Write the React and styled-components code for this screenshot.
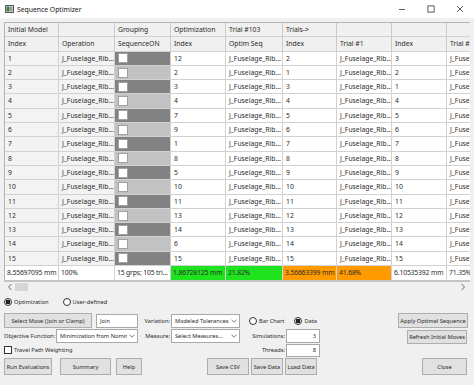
import React from "react";
import styled, { createGlobalStyle } from "styled-components";

const optIndex = [12, 2, 3, 4, 7, 9, 1, 8, 5, 10, 11, 13, 14, 6, 15];
const trialIndex = [2, 1, 3, 4, 5, 6, 7, 8, 9, 10, 11, 12, 13, 14, 15];
const trial2Index = [3, 2, 1, 4, 5, 6, 7, 8, 9, 10, 11, 12, 13, 14, 15];
const opName = "J_Fuselage_Rib…";

const topHeader = ["Initial Model", "", "Grouping", "Optimization", "Trial #103", "Trials->", "", "", ""];
const subHeader = ["Index", "Operation", "SequenceON", "Index", "Optim Seq", "Index", "Trial #1", "Index", "Trial #2"];
const summary = [
  { text: "8.55697095 mm" },
  { text: "100%" },
  { text: "15 grps; 105 tri…" },
  { text: "1.86728125 mm", tone: "good" },
  { text: "21.82%", tone: "good" },
  { text: "3.56663399 mm", tone: "warn" },
  { text: "41.68%", tone: "warn" },
  { text: "6.10535392 mm" },
  { text: "71.35%" },
];

const App = () => {
  return (
    <>
      <GlobalStyle />
      <Window>
        <TitleBar>
          <AppIcon viewBox="0 0 9 8">
            <rect x="0.5" y="0.5" width="8" height="7" fill="#e8e8e8" stroke="#5a5a5a" />
            <rect x="1.5" y="1.5" width="3" height="5" fill="#2f7d3a" />
            <rect x="5" y="1.5" width="2.5" height="5" fill="#9a9a9a" />
          </AppIcon>
          <Title>Sequence Optimizer</Title>
          <WindowButtons>
            <WindowButton>
              <svg width="8" height="8" viewBox="0 0 8 8">
                <line x1="1" y1="4.5" x2="7" y2="4.5" stroke="#333" strokeWidth="0.8" />
              </svg>
            </WindowButton>
            <WindowButton>
              <svg width="8" height="8" viewBox="0 0 8 8">
                <rect x="0.9" y="0.9" width="6.2" height="6.2" fill="none" stroke="#333" strokeWidth="0.8" />
              </svg>
            </WindowButton>
            <WindowButton>
              <svg width="8" height="8" viewBox="0 0 8 8">
                <path d="M1 1 L7 7 M7 1 L1 7" stroke="#333" strokeWidth="0.8" />
              </svg>
            </WindowButton>
          </WindowButtons>
        </TitleBar>

        <Body>
          <TableFrame>
            <Grid>
              {topHeader.map((t, i) => (
                <HeaderCell key={"h1" + i}>{t}</HeaderCell>
              ))}
              {subHeader.map((t, i) => (
                <HeaderCell key={"h2" + i}>{t}</HeaderCell>
              ))}
              {optIndex.map((opt, r) => (
                <React.Fragment key={"r" + r}>
                  <RowHeadCell>{r + 1}</RowHeadCell>
                  <RowHeadCell>{opName}</RowHeadCell>
                  <GroupCell $dark={r % 2 === 0}>
                    <CellCheck />
                  </GroupCell>
                  <DataCell>{opt}</DataCell>
                  <DataCell>{opName}</DataCell>
                  <DataCell>{trialIndex[r]}</DataCell>
                  <DataCell>{opName}</DataCell>
                  <DataCell>{trial2Index[r]}</DataCell>
                  <DataCell>{opName}</DataCell>
                </React.Fragment>
              ))}
              {summary.map((s, i) => (
                <SummaryCell key={"s" + i} $tone={s.tone}>
                  {s.text}
                </SummaryCell>
              ))}
            </Grid>
          </TableFrame>
          <ScrollBar>
            <ScrollArrow viewBox="0 0 6 8">
              <path d="M4.5 1 L1.5 4 L4.5 7" fill="none" stroke="#555" strokeWidth="0.9" />
            </ScrollArrow>
            <ScrollThumb />
            <ScrollArrow viewBox="0 0 6 8" style={{ marginLeft: "auto" }}>
              <path d="M1.5 1 L4.5 4 L1.5 7" fill="none" stroke="#555" strokeWidth="0.9" />
            </ScrollArrow>
          </ScrollBar>

          <Controls>
            {/* row 1 */}
            <RadioRow>
              <RadioOption>
                <Radio $checked />
                Optimization
              </RadioOption>
              <RadioOption>
                <Radio />
                User-defined
              </RadioOption>
            </RadioRow>
            <Spacer />
            <Spacer />
            <Spacer />

            {/* row 2 */}
            <FieldRow>
              <Button $w={88}>Select Move (Join or Clamp)</Button>
              <TextBox $w={42} style={{ marginLeft: 4 }}>Join</TextBox>
              <FieldLabel $w={33}>Variation:</FieldLabel>
              <Select $w={69}>
                <SelectText>Modeled Tolerances</SelectText>
                <Chevron />
              </Select>
            </FieldRow>
            <FieldRow>
              <RadioOption style={{ marginLeft: 1 }}>
                <Radio />
                Bar Chart
              </RadioOption>
              <RadioOption style={{ marginLeft: 10 }}>
                <Radio $checked />
                Data
              </RadioOption>
            </FieldRow>
            <Spacer />
            <FieldRow $end>
              <Button $w={70}>Apply Optimal Sequence</Button>
            </FieldRow>

            {/* row 3 */}
            <FieldRow>
              <FieldLabel $w={52} $left>Objective Function:</FieldLabel>
              <Select $w={82}>
                <SelectText>Minimization from Nominal</SelectText>
                <Chevron />
              </Select>
              <FieldLabel $w={33}>Measure:</FieldLabel>
              <Select $w={69}>
                <SelectText>Select Measures...</SelectText>
                <Chevron />
              </Select>
            </FieldRow>
            <FieldRow>
              <FieldLabel $w={38}>Simulations:</FieldLabel>
              <TextBox $w={34} $right>3</TextBox>
            </FieldRow>
            <Spacer />
            <FieldRow $end>
              <Button $w={60} $h={14} style={{ marginTop: 3, marginRight: 1 }}>
                Refresh Initial Moves
              </Button>
            </FieldRow>

            {/* row 4 */}
            <FieldRow>
              <CheckOption>
                <CheckBox />
                Travel Path Weighting
              </CheckOption>
            </FieldRow>
            <FieldRow>
              <FieldLabel $w={38}>Threads:</FieldLabel>
              <TextBox $w={34} $h={13} $right>8</TextBox>
            </FieldRow>
            <Spacer />
            <Spacer />
          </Controls>

          <BottomBar>
            <Button $w={48} $h={17}>Run Evaluations</Button>
            <Button $w={51} $h={17} style={{ marginLeft: 8 }}>Summary</Button>
            <Button $w={26} $h={17} style={{ marginLeft: 5 }}>Help</Button>
            <Button $w={42} $h={17} style={{ marginLeft: 65 }}>Save CSV</Button>
            <Button $w={32} $h={17} style={{ marginLeft: 2 }}>Save Data</Button>
            <Button $w={32} $h={17} style={{ marginLeft: 2 }}>Load Data</Button>
            <Button $w={45} $h={17} style={{ marginLeft: "auto", marginRight: 3 }}>Close</Button>
          </BottomBar>
        </Body>
      </Window>
    </>
  );
};

export default App;

const GlobalStyle = createGlobalStyle`
  html, body {
    margin: 0;
    padding: 0;
    background: #f0f0f0;
  }
  body {
    font-family: "Noto Sans", "Open Sans", sans-serif;
    color: #2a2a2a;
  }
  * {
    box-sizing: border-box;
  }
`;

const Window = styled.div`
  width: 474px;
  height: 385px;
  background: #f0f0f0;
  display: flex;
  flex-direction: column;
  overflow: hidden;
`;

const TitleBar = styled.div`
  height: 18px;
  flex-shrink: 0;
  background: #ffffff;
  display: flex;
  align-items: center;
  padding-left: 5px;
`;

const AppIcon = styled.svg`
  width: 9px;
  height: 8px;
`;

const Title = styled.span`
  font-size: 6.8px;
  margin-left: 3px;
  color: #111;
`;

const WindowButtons = styled.div`
  margin-left: auto;
  display: flex;
  height: 100%;
`;

const WindowButton = styled.div`
  width: 29px;
  display: flex;
  align-items: center;
  justify-content: center;
`;

const Body = styled.div`
  flex: 1;
  padding: 4px 4px 0;
  display: flex;
  flex-direction: column;
`;

const TableFrame = styled.div`
  width: 466px;
  overflow: hidden;
  border-top: 1px solid #b4b4b4;
  border-left: 1px solid #b4b4b4;
`;

const Grid = styled.div`
  display: grid;
  grid-template-columns: 54px 56px 56px 55px 57px 54px 55px 55px 60px;
  grid-auto-rows: 14.3px;
  width: max-content;
  background: #ffffff;
`;

const Cell = styled.div`
  border-right: 1px solid #d2d2d2;
  border-bottom: 1px solid #d2d2d2;
  font-size: 6.8px;
  line-height: 13px;
  padding-left: 3px;
  white-space: nowrap;
  overflow: hidden;
  text-overflow: clip;
  color: #2a2a2a;
`;

const HeaderCell = styled(Cell)`
  background: #f0f0f0;
  border-right-color: #cacaca;
`;

const RowHeadCell = styled(Cell)`
  background: #f3f3f3;
`;

const DataCell = styled(Cell)`
  background: #ffffff;
`;

const GroupCell = styled(Cell)`
  background: ${(p) => (p.$dark ? "#828282" : "#c2c2c2")};
  display: flex;
  align-items: center;
`;

const CellCheck = styled.span`
  width: 10px;
  height: 10px;
  background: #ffffff;
  border: 1px solid #a0a0a0;
`;

const toneColors = { good: "#1fe31f", warn: "#ff9a00" };

const SummaryCell = styled(Cell)`
  background: ${(p) => toneColors[p.$tone] || "#ffffff"};
  border-bottom: none;
  letter-spacing: -0.15px;
  padding-left: 2px;
`;

const ScrollBar = styled.div`
  width: 466px;
  height: 11px;
  border-top: 2px solid #c4c4c4;
  display: flex;
  align-items: center;
  padding: 0 4px 0 3px;
`;

const ScrollArrow = styled.svg`
  width: 6px;
  height: 8px;
`;

const ScrollThumb = styled.div`
  width: 13px;
  height: 8px;
  margin-left: 2px;
  background: #d6d6d6;
`;

const Controls = styled.div`
  display: grid;
  grid-template-columns: 236px 72px 1fr 70px;
  column-gap: 8px;
  grid-template-rows: 17px 15px 15px 14px;
  padding-top: 5px;
  padding-right: 2px;
  font-size: 5.7px;
`;

const Spacer = styled.div``;

const RadioRow = styled.div`
  display: flex;
  align-items: flex-start;
  gap: 14px;
  padding-top: 2px;
`;

const RadioOption = styled.label`
  display: flex;
  align-items: center;
  gap: 2px;
  font-size: 5.7px;
  white-space: nowrap;
`;

const Radio = styled.span`
  width: 8px;
  height: 8px;
  border-radius: 50%;
  border: 1px solid #333;
  background: ${(p) => (p.$checked ? "radial-gradient(circle, #222 0 2.2px, #fff 2.6px)" : "#fff")};
`;

const FieldRow = styled.div`
  display: flex;
  align-items: center;
  justify-content: ${(p) => (p.$end ? "flex-end" : "flex-start")};
`;

const Button = styled.div`
  width: ${(p) => p.$w}px;
  height: ${(p) => p.$h || 15}px;
  flex-shrink: 0;
  background: #e1e1e1;
  border: 1px solid #adadad;
  display: flex;
  align-items: center;
  justify-content: center;
  font-size: 5.7px;
  white-space: nowrap;
  overflow: hidden;
  color: #2a2a2a;
`;

const TextBox = styled.div`
  width: ${(p) => p.$w}px;
  height: ${(p) => p.$h || 14}px;
  flex-shrink: 0;
  background: #ffffff;
  border: 1px solid #a8a8a8;
  display: flex;
  align-items: center;
  justify-content: ${(p) => (p.$right ? "flex-end" : "flex-start")};
  padding: 0 3px;
  font-size: 5.7px;
`;

const FieldLabel = styled.span`
  width: ${(p) => p.$w}px;
  flex-shrink: 0;
  text-align: ${(p) => (p.$left ? "left" : "right")};
  padding-right: 1px;
  white-space: nowrap;
  font-size: 5.7px;
`;

const Select = styled.div`
  width: ${(p) => p.$w}px;
  height: 14px;
  flex-shrink: 0;
  background: #ffffff;
  border: 1px solid #a8a8a8;
  display: flex;
  align-items: center;
  padding: 0 2px 0 3px;
`;

const SelectText = styled.span`
  flex: 1;
  overflow: hidden;
  white-space: nowrap;
  font-size: 5.7px;
`;

const ChevronSvg = styled.svg`
  width: 6px;
  height: 4px;
  margin-left: 2px;
  flex-shrink: 0;
`;

const Chevron = () => (
  <ChevronSvg viewBox="0 0 6 4">
    <path d="M0.5 0.7 L3 3.2 L5.5 0.7" fill="none" stroke="#555" strokeWidth="0.8" />
  </ChevronSvg>
);

const CheckOption = styled.label`
  display: flex;
  align-items: center;
  gap: 2px;
  font-size: 5.7px;
`;

const CheckBox = styled.span`
  width: 8px;
  height: 8px;
  background: #ffffff;
  border: 1px solid #333;
`;

const BottomBar = styled.div`
  display: flex;
  align-items: center;
  margin-top: 1px;
`;
